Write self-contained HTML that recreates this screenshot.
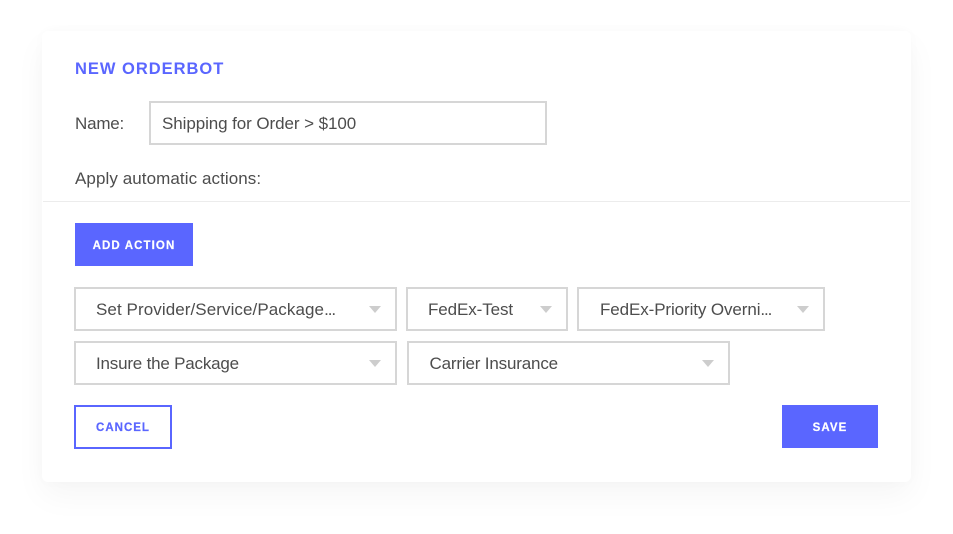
<!DOCTYPE html>
<html>
<head>
<meta charset="utf-8">
<style>
html,body{margin:0;padding:0;background:#fff;}
body{width:953px;height:534px;position:relative;overflow:hidden;font-family:"Liberation Sans",sans-serif;color:#4d4d4d;}
.card{position:absolute;left:42px;top:31px;width:869px;height:451px;background:#fff;border-radius:6px;box-shadow:0 14px 32px rgba(0,0,0,.04),0 0 14px rgba(0,0,0,.02);}
.t{position:absolute;white-space:nowrap;font-size:17px;line-height:20px;}
.d{letter-spacing:-1.1px;}
.box{position:absolute;box-sizing:border-box;height:44px;border:2px solid #d6d6d6;background:#fff;}
.arr{position:absolute;width:0;height:0;border-left:6.5px solid transparent;border-right:6.5px solid transparent;border-top:7px solid #cdcdcd;top:305.5px;}
.btn{position:absolute;box-sizing:border-box;height:43px;background:#5a66ff;color:#fff;font-weight:bold;font-size:11.5px;text-align:center;line-height:47px;-webkit-text-stroke:.2px currentColor;}
</style>
</head>
<body>
<div class="card"></div>
<div class="t" style="left:75px;top:59px;color:#5a66ff;font-size:16.5px;font-weight:bold;letter-spacing:.98px;">NEW ORDERBOT</div>
<div class="t" style="left:75px;top:114px;letter-spacing:-.2px;">Name:</div>
<div class="box" style="left:149px;top:101px;width:398px;"></div>
<div class="t" style="left:162px;top:114px;letter-spacing:-.08px;">Shipping for Order &gt; $100</div>
<div class="t" style="left:75px;top:169px;letter-spacing:.08px;">Apply automatic actions:</div>
<div style="position:absolute;left:43px;top:201px;width:867px;height:1px;background:#ececec;"></div>
<div class="btn" style="left:75px;top:223px;width:118px;letter-spacing:1.1px;">ADD ACTION</div>

<div class="box" style="left:74px;top:287px;width:323px;"></div>
<div class="t" style="left:96px;top:300px;letter-spacing:.08px;">Set Provider/Service/Package<span class="d">...</span></div>
<div class="arr" style="left:369px;"></div>

<div class="box" style="left:406px;top:287px;width:162px;"></div>
<div class="t" style="left:428px;top:300px;letter-spacing:-.1px;">FedEx-Test</div>
<div class="arr" style="left:540px;"></div>

<div class="box" style="left:577px;top:287px;width:248px;"></div>
<div class="t" style="left:600px;top:300px;letter-spacing:-.1px;">FedEx-Priority Overni<span class="d">...</span></div>
<div class="arr" style="left:797px;"></div>

<div class="box" style="left:74px;top:341px;width:323px;"></div>
<div class="t" style="left:96px;top:354px;letter-spacing:-.2px;">Insure the Package</div>
<div class="arr" style="left:369px;top:359.5px;"></div>

<div class="box" style="left:407px;top:341px;width:323px;"></div>
<div class="t" style="left:429.5px;top:354px;letter-spacing:-.17px;">Carrier Insurance</div>
<div class="arr" style="left:702px;top:359.5px;"></div>

<div class="btn" style="left:74px;top:405px;width:98px;height:44px;background:#fff;border:2px solid #5a66ff;color:#5a66ff;line-height:42px;letter-spacing:1px;">CANCEL</div>
<div class="btn" style="left:782px;top:405px;width:96px;letter-spacing:1.1px;">SAVE</div>
</body>
</html>
